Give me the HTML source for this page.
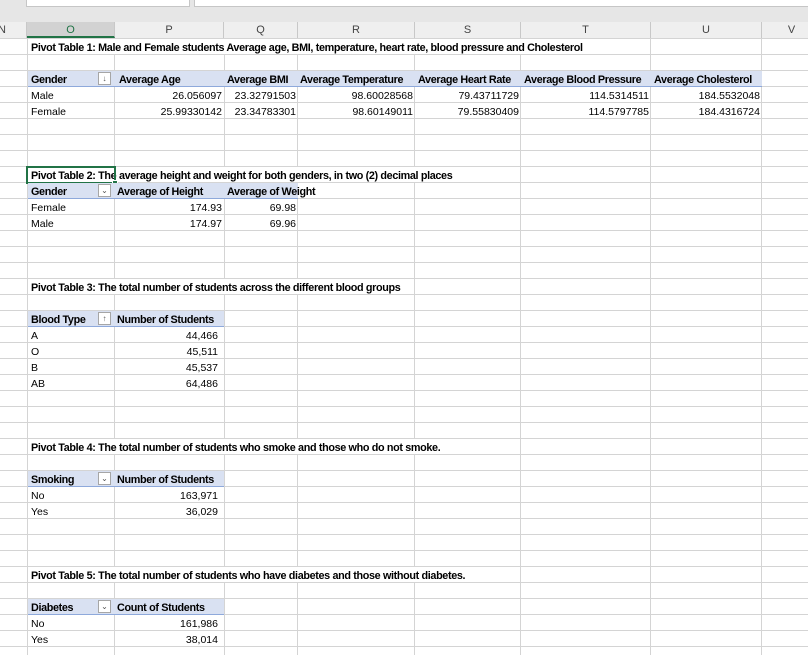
<!DOCTYPE html>
<html><head><style>
*{margin:0;padding:0;box-sizing:border-box}
body{width:808px;height:655px;overflow:hidden;background:#fff;position:relative;font-family:"Liberation Sans",Arial,sans-serif;font-size:10.5px;color:#000}
.a{position:absolute;white-space:nowrap;line-height:16px;height:16px;padding-top:1px}
.b{font-weight:bold;letter-spacing:-0.35px;font-size:10.8px}
.r{text-align:right}
.v{position:absolute;top:38px;bottom:0;width:1px;background:#d4d4d4}
.hd{position:absolute;height:16px;background:#d9e1f2;border-bottom:1px solid #8ea9db}
.ch{position:absolute;top:22px;height:16px;line-height:16px;text-align:center;font-size:11px;color:#444;border-right:1px solid #c8c8c8;background:#efefef}
.dd{position:absolute;width:13px;height:13px;border:1px solid #a6a6a6;background:#fff;font-size:8px;line-height:11px;text-align:center;color:#555}
</style></head><body>
<div style="position:absolute;left:0;top:0;width:808px;height:22px;background:#e6e6e6"></div>
<div style="position:absolute;left:26px;top:-1px;width:164px;height:8px;background:#fff;border:1px solid #c6c6c6"></div>
<div style="position:absolute;left:194px;top:-1px;width:620px;height:8px;background:#fff;border:1px solid #c6c6c6"></div>
<div style="position:absolute;left:0;top:22px;width:808px;height:16px;background:#efefef;border-bottom:1px solid #bdbdbd"></div>
<div class="ch" style="left:-20px;width:47px;text-align:right;padding-right:20px">N</div>
<div class="ch" style="left:27px;width:88px;background:#d2d2d2;color:#217346;border-bottom:2px solid #217346">O</div>
<div class="ch" style="left:115px;width:109px">P</div>
<div class="ch" style="left:224px;width:74px">Q</div>
<div class="ch" style="left:298px;width:117px">R</div>
<div class="ch" style="left:415px;width:106px">S</div>
<div class="ch" style="left:521px;width:130px">T</div>
<div class="ch" style="left:651px;width:111px">U</div>
<div class="ch" style="left:762px;width:60px">V</div>
<div style="position:absolute;left:0;top:38px;width:808px;bottom:0;background:repeating-linear-gradient(to bottom,#d4d4d4 0 1px,transparent 1px 16px)"></div>
<div class="v" style="left:27px"></div><div class="v" style="left:114px"></div><div class="v" style="left:224px"></div><div class="v" style="left:297px"></div><div class="v" style="left:414px"></div><div class="v" style="left:520px"></div><div class="v" style="left:650px"></div><div class="v" style="left:761px"></div>

<!-- PT1 -->
<div class="a b" style="left:28px;padding-left:3px;top:39px;background:#fff;width:580px;height:15px">Pivot Table 1: Male and Female students Average age, BMI, temperature, heart rate, blood pressure and Cholesterol</div>
<div class="hd" style="left:28px;top:71px;width:734px"></div>
<div class="dd" style="left:98px;top:72px">↓</div>
<div class="a b" style="left:31px;top:71px">Gender</div>
<div class="a b" style="left:119px;top:71px">Average Age</div>
<div class="a b" style="left:227px;top:71px">Average BMI</div>
<div class="a b" style="left:300px;top:71px">Average Temperature</div>
<div class="a b" style="left:418px;top:71px">Average Heart Rate</div>
<div class="a b" style="left:524px;top:71px">Average Blood Pressure</div>
<div class="a b" style="left:654px;top:71px">Average Cholesterol</div>
<div class="a" style="left:31px;top:87px">Male</div>
<div class="a r" style="left:115px;width:107px;top:87px">26.056097</div>
<div class="a r" style="left:224px;width:72px;top:87px">23.32791503</div>
<div class="a r" style="left:298px;width:115px;top:87px">98.60028568</div>
<div class="a r" style="left:415px;width:104px;top:87px">79.43711729</div>
<div class="a r" style="left:521px;width:128px;top:87px">114.5314511</div>
<div class="a r" style="left:651px;width:109px;top:87px">184.5532048</div>
<div class="a" style="left:31px;top:103px">Female</div>
<div class="a r" style="left:115px;width:107px;top:103px">25.99330142</div>
<div class="a r" style="left:224px;width:72px;top:103px">23.34783301</div>
<div class="a r" style="left:298px;width:115px;top:103px">98.60149011</div>
<div class="a r" style="left:415px;width:104px;top:103px">79.55830409</div>
<div class="a r" style="left:521px;width:128px;top:103px">114.5797785</div>
<div class="a r" style="left:651px;width:109px;top:103px">184.4316724</div>

<!-- PT2 -->
<div class="a b" style="left:28px;padding-left:3px;top:167px;background:#fff;width:445px;height:15px">Pivot Table 2: The average height and weight for both genders, in two (2) decimal places</div>
<div style="position:absolute;left:26px;top:166px;width:90px;height:18px;border:2px solid #217346"></div>
<div style="position:absolute;left:112px;top:180px;width:6px;height:6px;background:#217346;border:1px solid #fff"></div>
<div class="hd" style="left:28px;top:183px;width:270px"></div>
<div class="dd" style="left:98px;top:184px">⌄</div>
<div class="a b" style="left:31px;top:183px">Gender</div>
<div class="a b" style="left:117px;top:183px">Average of Height</div>
<div class="a b" style="left:227px;top:183px">Average of Weight</div>
<div class="a" style="left:31px;top:199px">Female</div>
<div class="a r" style="left:115px;width:107px;top:199px">174.93</div>
<div class="a r" style="left:224px;width:72px;top:199px">69.98</div>
<div class="a" style="left:31px;top:215px">Male</div>
<div class="a r" style="left:115px;width:107px;top:215px">174.97</div>
<div class="a r" style="left:224px;width:72px;top:215px">69.96</div>

<!-- PT3 -->
<div class="a b" style="left:28px;padding-left:3px;top:279px;background:#fff;width:385px;height:15px">Pivot Table 3: The total number of students across the different blood groups</div>
<div class="hd" style="left:28px;top:311px;width:196px"></div>
<div class="dd" style="left:98px;top:312px">↑</div>
<div class="a b" style="left:31px;top:311px">Blood Type</div>
<div class="a b" style="left:117px;top:311px">Number of Students</div>
<div class="a" style="left:31px;top:327px">A</div><div class="a r" style="left:115px;width:103px;top:327px">44,466</div>
<div class="a" style="left:31px;top:343px">O</div><div class="a r" style="left:115px;width:103px;top:343px">45,511</div>
<div class="a" style="left:31px;top:359px">B</div><div class="a r" style="left:115px;width:103px;top:359px">45,537</div>
<div class="a" style="left:31px;top:375px">AB</div><div class="a r" style="left:115px;width:103px;top:375px">64,486</div>

<!-- PT4 -->
<div class="a b" style="left:28px;padding-left:3px;top:439px;background:#fff;width:428px;height:15px">Pivot Table 4: The total number of students who smoke and those who do not smoke.</div>
<div class="hd" style="left:28px;top:471px;width:196px"></div>
<div class="dd" style="left:98px;top:472px">⌄</div>
<div class="a b" style="left:31px;top:471px">Smoking</div>
<div class="a b" style="left:117px;top:471px">Number of Students</div>
<div class="a" style="left:31px;top:487px">No</div><div class="a r" style="left:115px;width:103px;top:487px">163,971</div>
<div class="a" style="left:31px;top:503px">Yes</div><div class="a r" style="left:115px;width:103px;top:503px">36,029</div>

<!-- PT5 -->
<div class="a b" style="left:28px;padding-left:3px;top:567px;background:#fff;width:455px;height:15px">Pivot Table 5: The total number of students who have diabetes and those without diabetes.</div>
<div class="hd" style="left:28px;top:599px;width:196px"></div>
<div class="dd" style="left:98px;top:600px">⌄</div>
<div class="a b" style="left:31px;top:599px">Diabetes</div>
<div class="a b" style="left:117px;top:599px">Count of Students</div>
<div class="a" style="left:31px;top:615px">No</div><div class="a r" style="left:115px;width:103px;top:615px">161,986</div>
<div class="a" style="left:31px;top:631px">Yes</div><div class="a r" style="left:115px;width:103px;top:631px">38,014</div>
</body></html>
